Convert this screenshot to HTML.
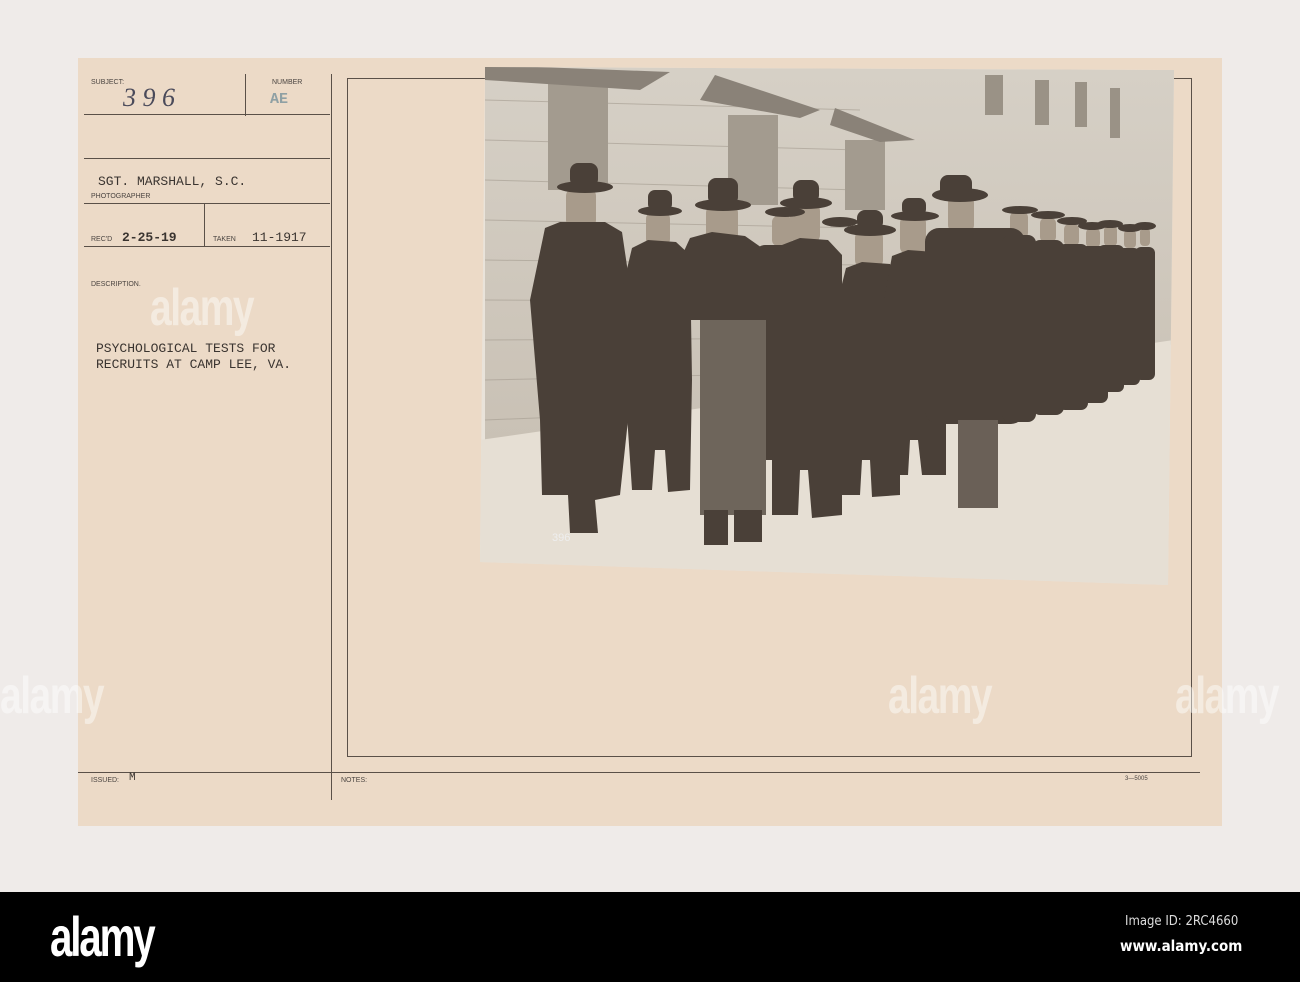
<!DOCTYPE html>
<html><head><meta charset="utf-8"><style>
body{margin:0;width:1300px;height:982px;background:#efebe9;position:relative;overflow:hidden;font-family:"Liberation Mono",monospace}
.card{position:absolute;left:78px;top:58px;width:1144px;height:768px;background:#ecdac7}
.l{position:absolute;background:#5a5048}
.t{position:absolute;color:#3a3430;white-space:nowrap}
.s{font-family:"Liberation Sans",sans-serif;font-size:7px;color:#4a4440}
.bar{position:absolute;left:0;top:892px;width:1300px;height:90px;background:#000}
.wm{position:absolute;font-family:"Liberation Sans",sans-serif;font-weight:bold;color:rgba(255,255,255,.45);letter-spacing:-2px;transform:scaleX(.75);transform-origin:left}
</style></head><body>
<div class="card"></div>
<div class="l" style="left:245px;top:74px;width:1px;height:42px"></div>
<div class="l" style="left:84px;top:114px;width:246px;height:1px"></div>
<div class="l" style="left:84px;top:158px;width:246px;height:1px"></div>
<div class="l" style="left:84px;top:203px;width:246px;height:1px"></div>
<div class="l" style="left:204px;top:204px;width:1px;height:43px"></div>
<div class="l" style="left:84px;top:246px;width:246px;height:1px"></div>
<div class="l" style="left:331px;top:74px;width:1px;height:726px"></div>
<div class="l" style="left:347px;top:78px;width:1px;height:678px"></div>
<div class="l" style="left:1191px;top:78px;width:1px;height:678px"></div>
<div class="l" style="left:347px;top:78px;width:845px;height:1px"></div>
<div class="l" style="left:347px;top:756px;width:845px;height:1px"></div>
<div class="l" style="left:78px;top:772px;width:1122px;height:1px"></div>

<div class="t s" style="left:91px;top:79px">SUBJECT:</div>
<div class="t" style="left:123px;top:83px;font-family:'Liberation Serif',serif;font-style:italic;font-size:26px;color:#4a4a5a">3 9 6</div>
<div class="t s" style="left:272px;top:79px">NUMBER</div>
<div class="t" style="left:270px;top:91px;font-size:15px;font-weight:bold;color:#8fa0a4">AE</div>
<div class="t" style="left:98px;top:174px;font-size:13px">SGT. MARSHALL, S.C.</div>
<div class="t s" style="left:91px;top:193px">PHOTOGRAPHER</div>
<div class="t s" style="left:91px;top:236px">REC'D</div>
<div class="t" style="left:122px;top:230px;font-size:13px;font-weight:bold">2-25-19</div>
<div class="t s" style="left:213px;top:236px">TAKEN</div>
<div class="t" style="left:252px;top:230px;font-size:13px">11-1917</div>
<div class="t s" style="left:91px;top:281px">DESCRIPTION.</div>
<div class="t" style="left:96px;top:341px;font-size:13px;line-height:16px">PSYCHOLOGICAL TESTS FOR<br>RECRUITS AT CAMP LEE, VA.</div>
<div class="t s" style="left:91px;top:777px">ISSUED:</div>
<div class="t" style="left:129px;top:772px;font-size:11px">M</div>
<div class="t s" style="left:341px;top:777px">NOTES:</div>
<div class="t s" style="left:1125px;top:776px;font-size:6px">3—5005</div>

<svg style="position:absolute;left:0;top:0" width="1300" height="982">
<defs><clipPath id="c"><polygon points="485,67 1174,70 1168,585 480,562"/></clipPath>
<linearGradient id="g" x1="0" y1="0" x2="0" y2="1"><stop offset="0" stop-color="#d6d0c6"/><stop offset="1" stop-color="#c9c1b5"/></linearGradient></defs>
<g clip-path="url(#c)">
<rect x="470" y="60" width="720" height="530" fill="#e9e3da"/>
<polygon points="485,67 1174,70 1174,340 1160,360 485,440" fill="url(#g)"/>
<g stroke="#aaa296" stroke-width="1" opacity=".7">
<line x1="485" y1="100" x2="860" y2="110"/><line x1="485" y1="140" x2="860" y2="150"/><line x1="485" y1="180" x2="860" y2="190"/><line x1="485" y1="220" x2="860" y2="228"/><line x1="485" y1="260" x2="860" y2="265"/><line x1="485" y1="300" x2="860" y2="302"/><line x1="485" y1="340" x2="860" y2="338"/><line x1="485" y1="380" x2="860" y2="372"/><line x1="485" y1="420" x2="860" y2="405"/>
</g>
<rect x="548" y="70" width="60" height="120" fill="#a39b8f"/>
<rect x="728" y="115" width="50" height="90" fill="#a39b8f"/>
<rect x="845" y="140" width="40" height="70" fill="#a39b8f"/>
<rect x="985" y="75" width="18" height="40" fill="#9a9286"/><rect x="1035" y="80" width="14" height="45" fill="#9a9286"/><rect x="1075" y="82" width="12" height="45" fill="#9a9286"/><rect x="1110" y="88" width="10" height="50" fill="#9a9286"/>
<polygon points="485,65 670,72 640,90 485,80" fill="#8a8278"/>
<polygon points="715,75 820,110 800,118 700,100" fill="#8a8278"/>
<polygon points="835,108 915,140 880,142 830,125" fill="#8a8278"/>
<polygon points="480,440 1174,340 1174,590 480,590" fill="#e6dfd4"/>
<!-- faces -->
<g fill="#a89b8b">
<rect x="566" y="188" width="30" height="40" rx="8"/>
<rect x="646" y="212" width="24" height="34" rx="7"/>
<rect x="706" y="205" width="32" height="38" rx="8"/>
<rect x="790" y="203" width="30" height="40" rx="8"/>
<rect x="855" y="230" width="28" height="38" rx="8"/>
<rect x="900" y="216" width="26" height="38" rx="7"/>
<rect x="948" y="196" width="26" height="36" rx="7"/>
<rect x="772" y="216" width="20" height="30" rx="6"/>
<rect x="1010" y="212" width="18" height="26" rx="5"/><rect x="1040" y="218" width="16" height="24" rx="5"/><rect x="1064" y="224" width="15" height="22" rx="5"/><rect x="1086" y="228" width="14" height="20" rx="5"/><rect x="1104" y="226" width="13" height="20" rx="4"/><rect x="1124" y="230" width="12" height="18" rx="4"/><rect x="1140" y="228" width="10" height="18" rx="4"/>
</g>
<g fill="#4a4038">
<ellipse cx="585" cy="187" rx="28" ry="6"/><rect x="570" y="163" width="28" height="24" rx="8"/>
<path d="M545,228 L560,222 L605,222 L622,232 L632,300 L628,420 L620,495 L595,500 L598,533 L570,533 L568,495 L542,495 L540,420 L530,300 Z"/>
<ellipse cx="660" cy="211" rx="22" ry="5"/><rect x="648" y="190" width="24" height="21" rx="7"/>
<path d="M632,248 L648,240 L676,242 L690,255 L692,380 L690,490 L668,492 L665,450 L655,450 L652,490 L632,490 L626,400 L622,290 Z"/>
<ellipse cx="723" cy="205" rx="28" ry="6"/><rect x="708" y="178" width="30" height="27" rx="8"/>
<path d="M690,238 L712,232 L745,236 L765,250 L772,320 L676,320 L680,260 Z"/>
<ellipse cx="785" cy="212" rx="20" ry="5"/><rect x="755" y="245" width="40" height="215" rx="10"/>
<ellipse cx="806" cy="203" rx="26" ry="6"/><rect x="793" y="180" width="26" height="23" rx="8"/>
<path d="M782,245 L800,238 L828,240 L842,255 L842,515 L812,518 L808,470 L800,470 L798,515 L772,515 L772,300 Z"/>
<ellipse cx="870" cy="230" rx="26" ry="6"/><rect x="857" y="210" width="26" height="20" rx="8"/>
<path d="M846,268 L862,262 L890,264 L900,280 L900,495 L872,497 L870,460 L862,460 L860,495 L838,495 L838,300 Z"/>
<ellipse cx="915" cy="216" rx="24" ry="5"/><rect x="902" y="198" width="24" height="18" rx="7"/>
<path d="M892,256 L908,250 L935,252 L946,268 L946,475 L922,475 L918,440 L910,440 L908,475 L884,475 L884,300 Z"/>
<ellipse cx="840" cy="222" rx="18" ry="5"/>
<ellipse cx="960" cy="195" rx="28" ry="7"/><rect x="940" y="175" width="32" height="25" rx="8"/><rect x="925" y="228" width="100" height="196" rx="14"/>
<ellipse cx="1020" cy="210" rx="18" ry="4"/><rect x="1002" y="235" width="34" height="187" rx="8"/>
<ellipse cx="1048" cy="215" rx="17" ry="4"/><rect x="1032" y="240" width="32" height="175" rx="8"/>
<ellipse cx="1072" cy="221" rx="15" ry="4"/><rect x="1058" y="244" width="30" height="166" rx="7"/>
<ellipse cx="1092" cy="226" rx="14" ry="4"/><rect x="1080" y="246" width="28" height="157" rx="7"/>
<ellipse cx="1110" cy="224" rx="13" ry="4"/><rect x="1098" y="245" width="26" height="147" rx="6"/>
<ellipse cx="1130" cy="228" rx="12" ry="4"/><rect x="1116" y="248" width="24" height="137" rx="6"/>
<ellipse cx="1145" cy="226" rx="11" ry="4"/><rect x="1135" y="247" width="20" height="133" rx="6"/>
</g>
<rect x="700" y="320" width="66" height="195" fill="#6e655b"/><rect x="704" y="510" width="24" height="35" fill="#4a4038"/><rect x="734" y="510" width="28" height="32" fill="#4a4038"/>
<rect x="958" y="420" width="40" height="88" fill="#6a6057"/>
<text x="552" y="541" font-family="Liberation Sans,sans-serif" font-size="11" fill="#eee">396</text>
</g>
</svg>

<div class="wm" style="left:150px;top:278px;font-size:52px">alamy</div>
<div class="wm" style="left:888px;top:666px;font-size:52px">alamy</div>
<div class="wm" style="left:0;top:666px;font-size:52px">alamy</div>
<div class="wm" style="left:1175px;top:666px;font-size:52px">alamy</div>

<div class="bar"></div>
<div style="position:absolute;left:50px;top:904px;font-family:'Liberation Sans',sans-serif;font-weight:bold;font-size:56px;color:#fff;letter-spacing:-3px;transform:scaleX(.72);transform-origin:left">alamy</div>
<div style="position:absolute;left:1125px;top:914px;font-family:'DejaVu Sans Condensed','Liberation Sans',sans-serif;font-size:13px;color:#ddd">Image ID: 2RC4660</div>
<div style="position:absolute;left:1120px;top:937px;font-family:'DejaVu Sans Condensed','Liberation Sans',sans-serif;font-size:15px;font-weight:bold;color:#fff">www.alamy.com</div>
</body></html>
